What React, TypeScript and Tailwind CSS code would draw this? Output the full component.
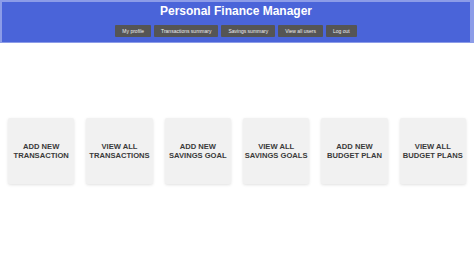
const navItems = ["My profile", "Transactions summary", "Savings summary", "View all users", "Log out"];

const cards = [
  ["ADD NEW", "TRANSACTION"],
  ["VIEW ALL", "TRANSACTIONS"],
  ["ADD NEW", "SAVINGS GOAL"],
  ["VIEW ALL", "SAVINGS GOALS"],
  ["ADD NEW", "BUDGET PLAN"],
  ["VIEW ALL", "BUDGET PLANS"],
];

export default function App() {
  return (
    <div className="w-[474px] h-[266px] bg-white font-['Liberation_Sans',Arial,sans-serif] overflow-hidden">
      {/* Header */}
      <header className="h-[43px] bg-[#4a64d9] border-t-2 border-l-2 border-r-4 border-b border-[#8c9ce8] flex flex-col items-center">
        <h1 className="mt-[2px] text-[12px] leading-[14px] font-bold text-white">
          Personal Finance Manager
        </h1>
        <nav className="mt-[7px] flex gap-[3px]">
          {navItems.map((item) => (
            <button
              key={item}
              className="h-[12px] px-[7px] bg-[#555555] text-[#eeeeee] text-[5px] leading-[12px] rounded-[1px]"
            >
              {item}
            </button>
          ))}
        </nav>
      </header>

      {/* Cards */}
      <main className="mt-[75px] px-[8px] grid grid-cols-6 gap-[12px]">
        {cards.map(([a, b]) => (
          <div
            key={a + b}
            className="h-[66px] bg-[#f1f1f1] shadow-[0_1px_3px_rgba(0,0,0,0.12)] rounded-[2px] flex flex-col items-center justify-center text-center text-[#3a3a3a] font-bold text-[7.6px] leading-[9px]"
          >
            <span>{a}</span>
            <span className="whitespace-nowrap">{b}</span>
          </div>
        ))}
      </main>
    </div>
  );
}
